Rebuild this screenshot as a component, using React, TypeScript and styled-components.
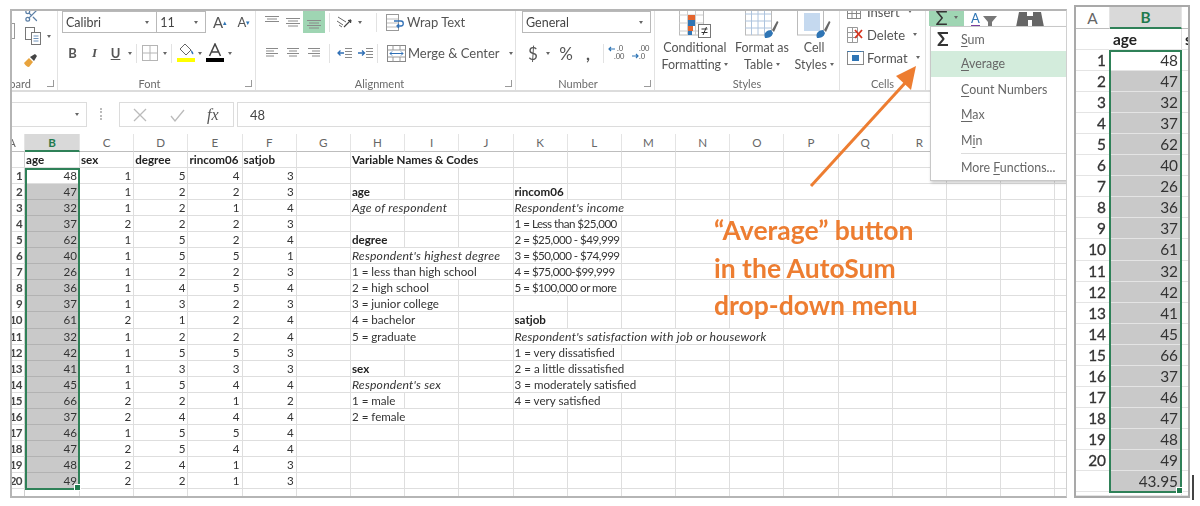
import styled, { createGlobalStyle } from 'styled-components';
import { Scissors } from 'lucide-react';

const GlobalStyle = createGlobalStyle`
  html, body {
    margin: 0;
    background: #fff;
  }
  body {
    font-family: Lato, "Open Sans", sans-serif;
    color: #333;
  }
`;

const GREEN = '#2f8158';
const ORANGE = '#ed7d31';

const Page = styled.div`
  width: 1200px;
  height: 506px;
  box-sizing: border-box;
  padding: 5px 0 0 10px;
  display: flex;
  align-items: flex-start;
  overflow: hidden;
  filter: blur(0.5px);
`;

const ExcelWindow = styled.div`
  position: relative;
  width: 1057px;
  height: 489px;
  margin-top: 4px;
  box-sizing: border-box;
  border: 2px solid #b5b5b5;
  border-right: 1px solid #d0d0d0;
  overflow: hidden;
`;

const Ribbon = styled.div`
  display: flex;
  height: 81px;
  box-sizing: border-box;
  border-bottom: 2px solid #dcdcdc;
  overflow: hidden;
`;

const Group = styled.div<{ $w: number }>`
  width: ${(p) => p.$w}px;
  flex: none;
  height: 80px;
  box-sizing: border-box;
  border-right: 1px solid #e2e2e2;
  display: flex;
  flex-direction: column;
  position: relative;
`;

const GroupLabel = styled.div<{ $shift?: number }>`
  margin-top: auto;
  height: 15px;
  line-height: 15px;
  padding-right: ${(p) => p.$shift ?? 0}px;
  font-size: 11px;
  color: #6a6a6a;
  text-align: center;
  position: relative;
`;

const Launcher = styled.span`
  position: absolute;
  right: 3px;
  top: 4px;
  width: 6px;
  height: 6px;
  border-left: 1px solid #9a9a9a;
  border-bottom: 1px solid #9a9a9a;
  transform: rotate(-90deg);
`;

const ClipLabel = styled.span`
  position: absolute;
  right: 26px;
  width: 21px;
  overflow: hidden;
  direction: rtl;
`;

const PasteStub = styled.div`
  position: absolute;
  left: -2px;
  top: 12px;
  width: 4px;
  height: 14px;
  border: 1px solid #999;
  border-left: 0;
`;

const Row = styled.div<{ $top?: number; $left?: number }>`
  display: flex;
  align-items: center;
  height: 22px;
  margin-top: ${(p) => p.$top ?? 0}px;
  margin-left: ${(p) => p.$left ?? 0}px;
`;

const Combo = styled.div<{ $w: number }>`
  width: ${(p) => p.$w}px;
  height: 22px;
  box-sizing: border-box;
  margin-right: -1px;
  padding: 0 7px 0 3px;
  border: 1px solid #b9b9b9;
  display: flex;
  align-items: center;
  justify-content: space-between;
  font-size: 12.5px;
  color: #444;
`;

const Slot = styled.div<{ $w: number; $on?: boolean }>`
  width: ${(p) => p.$w}px;
  height: 22px;
  flex: none;
  display: flex;
  align-items: center;
  justify-content: center;
  color: #555;
  font-size: 13px;
  background: ${(p) => (p.$on ? '#9fd5b3' : 'transparent')};
`;

const Caret = styled.i`
  display: inline-block;
  flex: none;
  width: 0;
  height: 0;
  border-left: 2.5px solid transparent;
  border-right: 2.5px solid transparent;
  border-top: 3px solid #666;
`;

const ToolSep = styled.i`
  width: 1px;
  height: 19px;
  flex: none;
  margin: 0 4px;
  background: #e2e2e2;
`;

const ToolText = styled.span<{ $gap?: number }>`
  font-size: 13px;
  color: #555;
  margin-left: 2px;
  margin-right: ${(p) => p.$gap ?? 0}px;
  white-space: nowrap;
`;

const BigButtons = styled.div`
  display: flex;
`;

const BigButton = styled.div<{ $w: number }>`
  width: ${(p) => p.$w}px;
  display: flex;
  flex-direction: column;
  align-items: center;
  font-size: 12.5px;
  line-height: 17px;
  color: #555;
  white-space: nowrap;
  svg {
    display: block;
  }
  span {
    display: flex;
    align-items: center;
    gap: 3px;
  }
`;

const CellsRow = styled.div`
  display: flex;
  align-items: center;
  height: 23px;
  padding-left: 7px;
  font-size: 13px;
  color: #555;
  gap: 3px;
  &:first-child {
    margin-top: -11px;
  }
  ${Caret} {
    margin-left: 5px;
  }
`;

const EditingTop = styled.div`
  display: flex;
  align-items: flex-start;
  height: 15px;
`;

const SumButton = styled.div`
  width: 35px;
  height: 15px;
  margin-left: 3px;
  background: #9fd5b3;
  overflow: hidden;
  display: flex;
  justify-content: center;
  gap: 6px;
  font-size: 20px;
  line-height: 13px;
  color: #333;
  ${Caret} {
    margin-top: 5px;
  }
`;

const FormulaBar = styled.div`
  display: flex;
  align-items: flex-start;
  height: 42px;
  padding-top: 10px;
  box-sizing: border-box;
`;

const FormulaBox = styled.div<{ $w?: number; $left?: number }>`
  width: ${(p) => (p.$w ? `${p.$w}px` : 'auto')};
  flex: ${(p) => (p.$w ? 'none' : '1')};
  height: 25px;
  margin-left: ${(p) => p.$left ?? 0}px;
  box-sizing: border-box;
  border: 1px solid #dcdcdc;
  border-left-width: ${(p) => (p.$left ? 1 : 0)}px;
  display: flex;
  align-items: center;
  font-size: 13px;
  color: #444;
`;

const NameCaret = styled(Caret)`
  margin-left: auto;
  margin-right: 7px;
`;

const Dots = styled.div`
  width: 2px;
  height: 12px;
  margin: 6px 0 0 13px;
  border-left: 2px dotted #bbb;
`;

const Fx = styled.span`
  margin-left: 2px;
  font-family: "Liberation Serif", serif;
  font-style: italic;
  font-size: 16px;
  color: #555;
`;

const Sheet = styled.div`
  position: relative;
  display: grid;
  grid-template-columns: 13px 55px repeat(19, 54.2px);
  grid-template-rows: 18px repeat(22, 16.05px);
  height: 362px;
  overflow: hidden;
  font-size: 11.6px;
  line-height: 15px;
`;

const ColHead = styled.div<{ $active?: boolean }>`
  display: flex;
  align-items: center;
  justify-content: center;
  box-sizing: border-box;
  font-weight: ${(p) => (p.$active ? 700 : 400)};
  color: ${(p) => (p.$active ? '#1f7a4d' : '#666')};
  background: ${(p) => (p.$active ? '#d9d9d9' : '#fff')};
  border-right: 1px solid #e4e4e4;
  border-bottom: ${(p) => (p.$active ? `2px solid ${GREEN}` : '1px solid #bdbdbd')};
`;

const ClippedA = styled(ColHead)`
  justify-content: flex-start;
  overflow: hidden;
  text-indent: -4px;
`;

const RowHead = styled.div`
  display: flex;
  align-items: center;
  justify-content: flex-end;
  box-sizing: border-box;
  padding-right: 2px;
  color: #444;
  font-weight: 700;
  letter-spacing: -0.6px;
  border-right: 1px solid #cfcfcf;
  border-bottom: 1px solid #dedede;
  white-space: nowrap;
`;

type Kind = 'bold' | 'italic' | 'money';

const Cell = styled.div<{
  $right?: boolean;
  $kind?: Kind;
  $selected?: boolean;
  $span?: number;
}>`
  grid-column: span ${(p) => p.$span ?? 1};
  display: flex;
  align-items: center;
  justify-content: ${(p) => (p.$right ? 'flex-end' : 'flex-start')};
  box-sizing: border-box;
  padding: 0 2px 0 1px;
  white-space: nowrap;
  overflow: hidden;
  font-weight: ${(p) => (p.$kind === 'bold' ? 700 : 400)};
  font-style: ${(p) => (p.$kind === 'italic' ? 'italic' : 'normal')};
  font-size: ${(p) => (p.$kind === 'italic' ? '12.2px' : 'inherit')};
  letter-spacing: ${(p) => (p.$kind === 'italic' ? '0.2px' : p.$kind === 'money' ? '-0.5px' : 'normal')};
  color: ${(p) => (p.$kind === 'bold' ? '#222' : '#333')};
  background: ${(p) => (p.$selected ? '#c9c9c9' : 'transparent')};
  border-right: 1px solid #dedede;
  border-bottom: 1px solid ${(p) => (p.$selected ? '#b2b2b2' : '#dedede')};
`;

const Selection = styled.div<{ $left: number; $top: number; $w: number; $h: number }>`
  position: absolute;
  left: ${(p) => p.$left}px;
  top: ${(p) => p.$top}px;
  width: ${(p) => p.$w}px;
  height: ${(p) => p.$h}px;
  box-sizing: border-box;
  border: 2px solid ${GREEN};
  &::after {
    content: '';
    position: absolute;
    right: -3px;
    bottom: -3px;
    width: 5px;
    height: 5px;
    background: #1f7a4d;
    border: 1px solid #fff;
  }
`;

const SumMenu = styled.div`
  position: absolute;
  left: 918px;
  top: 15px;
  width: 138px;
  height: 155px;
  box-sizing: border-box;
  background: #fff;
  border: 1px solid #c8c8c8;
  box-shadow: 1px 2px 3px rgba(0, 0, 0, 0.2);
`;

const MenuItem = styled.div<{ $on?: boolean }>`
  position: relative;
  height: 25.5px;
  padding-left: 30px;
  display: flex;
  align-items: center;
  font-size: 12.4px;
  color: #666;
  background: ${(p) => (p.$on ? '#d3ecdc' : 'transparent')};
  &:first-child {
    height: 24px;
  }
  u {
    text-underline-offset: 2px;
  }
`;

const MenuSigma = styled.b`
  position: absolute;
  left: 6px;
  top: 0;
  font-size: 19px;
  font-weight: 700;
  color: #333;
`;

const MenuSep = styled.div`
  height: 1px;
  margin: 0 0 1px 30px;
  background: #dcdcdc;
`;

const Callout = styled.div`
  position: absolute;
  left: 702px;
  top: 201px;
  font-size: 26.5px;
  font-weight: 700;
  line-height: 37.5px;
  color: ${ORANGE};
  white-space: nowrap;
`;

const ArrowLayer = styled.svg`
  position: absolute;
  left: 788px;
  top: 49px;
`;

const Panel = styled.div`
  position: relative;
  width: 116px;
  height: 493px;
  margin-left: 7px;
  flex: none;
  box-sizing: border-box;
  border: 2px solid #a9a9a9;
  overflow: hidden;
  display: grid;
  grid-template-columns: 34px 72px 8px;
  grid-template-rows: 22px repeat(22, 21.05px);
  font-size: 15.4px;
  ${RowHead} {
    border-right-color: transparent;
    border-bottom-color: #e4e4e4;
    padding-right: 3px;
    font-weight: 400;
    letter-spacing: normal;
    color: #333;
    -webkit-text-stroke: 0.3px #333;
  }
  ${Cell} {
    padding: 0 3px;
    border-bottom-color: #e4e4e4;
  }
`;

const TextCursor = styled.div`
  width: 2px;
  height: 25px;
  flex: none;
  margin: 470px 0 0 2px;
  background: #444;
`;

/* ---------- ribbon drawings ---------- */

const LinesIcon = ({ d }: { d: string }) => (
  <svg width="16" height="14" viewBox="0 0 16 14" fill="none" stroke="#8a8a8a" strokeWidth="1">
    <path d={d} />
  </svg>
);

const AlignTop = () => <LinesIcon d="M1 1.5h14M3 4h10M1 6.5h14" />;
const AlignMiddle = () => <LinesIcon d="M1 3.5h14M3 6h10M1 8.500h14M3 11h10" />;
const AlignBottom = () => <LinesIcon d="M1 5.5h14M3 8h10M1 10.500h14M3 13h10" />;
const TextLeft = () => <LinesIcon d="M2 2.500h12M2 5h8M2 7.500h12M2 10h8" />;
const TextCenter = () => <LinesIcon d="M2 2.500h12M4 5h8M2 7.500h12M4 10h8" />;
const TextRight = () => <LinesIcon d="M2 2.500h12M6 5h8M2 7.500h12M6 10h8" />;

const Indent = ({ flip }: { flip?: boolean }) => (
  <svg width="16" height="12" viewBox="0 0 16 12" fill="none">
    <path d="M8 1.500h7M8 4.500h7M8 7.500h7M8 10.500h7" stroke="#8a8a8a" />
    <path
      d={flip ? 'M0 6h6M4 3.500L6.500 6 4 8.500' : 'M7 6H1M3.500 3.500L1 6l2.500 2.500'}
      stroke="#2f6fb5"
      strokeWidth="1.300"
    />
  </svg>
);

const Orientation = () => (
  <svg width="18" height="16" viewBox="0 0 18 16" fill="none" stroke="#666">
    <path d="M2 3l8 5M1 7l6 4M3 11l3 2" />
    <path d="M8 13L15 6M15 6l-3 .500M15 6l-.500 3" stroke="#444" strokeWidth="1.200" />
  </svg>
);

const WrapIcon = () => (
  <svg width="19" height="17" viewBox="0 0 19 17" fill="none">
    <rect x=".5" y=".5" width="12" height="16" stroke="#999" fill="#fff" />
    <path d="M1 5h11M1 9h11M1 13h11" stroke="#bbb" />
    <path d="M8 7h7c3 0 3 5 0 5h-3M13 10l-2 2 2 2" stroke="#2f6fb5" strokeWidth="1.300" />
  </svg>
);

const MergeIcon = () => (
  <svg width="19" height="17" viewBox="0 0 19 17" fill="none">
    <rect x=".5" y=".5" width="18" height="16" stroke="#888" fill="#fff" />
    <path d="M.5 5h18M.5 12h18M6 .5V5M13 .5V5M6 12v4.500M13 12v4.500" stroke="#999" />
    <path d="M3 8.500h13M5 6.500l-2 2 2 2M14 6.500l2 2-2 2" stroke="#2f6fb5" />
  </svg>
);

const BordersIcon = () => (
  <svg width="16" height="16" viewBox="0 0 16 16" fill="none" stroke="#b5b5b5">
    <rect x=".5" y=".5" width="15" height="15" />
    <path d="M8 0v16M0 8h16" />
  </svg>
);

const FillIcon = () => (
  <svg width="18" height="20" viewBox="0 0 18 20" fill="none">
    <path d="M8 1l6 6-5 5-6-6z" stroke="#666" fill="#fff" />
    <path d="M14 7c2 2 3 3 2 4.500-1.500-1-2-2.500-2-4.500z" fill="#2f6fb5" />
    <rect y="15" width="18" height="4" fill="#ffff00" />
  </svg>
);

const FontColorIcon = () => (
  <svg width="18" height="20" viewBox="0 0 18 20" fill="none">
    <path d="M3.500 13L9 1l5.500 12M5.500 9h7" stroke="#444" strokeWidth="1.500" />
    <rect y="15" width="18" height="4" fill="#000" />
  </svg>
);

const CopyIcon = () => (
  <svg width="17" height="18" viewBox="0 0 17 18" fill="none" stroke="#777">
    <rect x=".5" y=".5" width="9" height="12" fill="#fff" />
    <rect x="6.500" y="5.500" width="9" height="12" fill="#fff" />
    <path d="M8.500 9h5M8.500 11.500h5M8.500 14h5" stroke="#6f93bb" />
  </svg>
);

const BrushIcon = () => (
  <svg width="15" height="15" viewBox="0 0 15 15">
    <path d="M1 10l5-5 4 4-4 5c-2 0-4-2-5-4z" fill="#e8a33d" />
    <path d="M7 4l4 4 3-5-2-2z" fill="#444" />
  </svg>
);

const ConditionalIcon = () => (
  <svg width="32" height="28" viewBox="0 0 32 28" fill="none">
    <rect x=".5" y="-4" width="24" height="28" stroke="#bbb" fill="#fff" />
    <path d="M8.500-4v28M16.500-4v28M0 4h24M0 12h24M0 20h24" stroke="#ccc" />
    <rect x="9" y="4" width="7" height="5" fill="#e4652e" />
    <rect x="9" y="9" width="7" height="6" fill="#2f75b5" />
    <rect x="9" y="15" width="5" height="5" fill="#e4652e" />
    <rect x="9" y="20" width="4" height="4" fill="#2f75b5" />
    <rect x="19.500" y="13.500" width="12" height="13" stroke="#777" fill="#fff" />
    <path d="M22.500 18h6M22.500 21.500h6M27.500 16l-3.500 8" stroke="#333" />
  </svg>
);

const TableIcon = ({ fillAll }: { fillAll?: boolean }) => (
  <svg width="34" height="28" viewBox="0 0 34 28" fill="none">
    <rect x=".5" y="-4" width="26" height="28" stroke="#bbb" fill="#fff" />
    {fillAll ? (
      <rect x="7" y="2" width="16" height="18" fill="#c5d9ef" />
    ) : (
      <path d="M6.500-4v28M13-4v28M19.500-4v28M0 3h26M0 10h26M0 17h26" stroke="#aec4de" />
    )}
    <path d="M20 27c-2-5 2-8 6-8l2 3c-1 4-4 5-8 5z" fill="#2f75b5" />
    <path d="M27 19l5-9 1.500 1-4.500 10z" fill="#666" />
  </svg>
);

const InsertIcon = () => (
  <svg width="17" height="15" viewBox="0 0 17 15" fill="none" stroke="#888">
    <rect x=".5" y="4.500" width="13" height="10" />
    <path d="M5 4.500v10M9.500 4.500v10M.5 9.500h13" />
  </svg>
);

const DeleteIcon = () => (
  <svg width="17" height="18" viewBox="0 0 17 18" fill="none">
    <path d="M.5 1.500h10v15H.5zM.5 6.500h10M.5 11.500h10M5.500 1.500v15" stroke="#999" />
    <path d="M8 4l7 8M15 4l-7 8" stroke="#d6341f" strokeWidth="1.800" />
  </svg>
);

const FormatIcon = () => (
  <svg width="17" height="18" viewBox="0 0 17 18" fill="none">
    <rect x=".5" y="2.500" width="16" height="13" stroke="#888" fill="#fff" />
    <path d="M.5 2.500h16" stroke="#2f75b5" strokeDasharray="2 1" />
    <rect x="5" y="6" width="7" height="6" fill="#2f75b5" />
  </svg>
);

const SortIcon = () => (
  <svg width="34" height="15" viewBox="0 0 34 15" fill="none">
    <text x="1" y="11" fontSize="13" fontFamily="Lato, sans-serif" fill="#2f75b5">A</text>
    <rect x="1" y="13" width="9" height="2" fill="#7a3fa0" />
    <path d="M13 4h14l-5 6v5h-4v-5z" fill="#777" />
  </svg>
);

const Binoculars = () => (
  <svg width="28" height="15" viewBox="0 0 28 15">
    <path d="M3 0h8v4h6V0h8l3 15H16V8h-4v7H0z" fill="#666" />
  </svg>
);

const Decimals = ({ more }: { more?: boolean }) => (
  <svg width="20" height="16" viewBox="0 0 20 16" fontSize="7.500" fontFamily="Lato, sans-serif" fill="#555">
    <text x={more ? 9 : 8} y="6">{more ? '.0' : '.00'}</text>
    <text x={more ? 6 : 8} y="14">{more ? '.00' : '.0'}</text>
    <path d={more ? 'M1 4h6M3 2L1 4l2 2' : 'M1 11h6M5 9l2 2-2 2'} stroke="#2f75b5" strokeWidth="1.200" fill="none" />
  </svg>
);

/* ---------- data ---------- */

const columns = 'BCDEFGHIJKLMNOPQRSTU'.split('');

const numbers = [
  [48, 1, 5, 4, 3], [47, 1, 2, 2, 3], [32, 1, 2, 1, 4], [37, 2, 2, 2, 3], [62, 1, 5, 2, 4],
  [40, 1, 5, 5, 1], [26, 1, 2, 2, 3], [36, 1, 4, 5, 4], [37, 1, 3, 2, 3], [61, 2, 1, 2, 4],
  [32, 1, 2, 2, 4], [42, 1, 5, 5, 3], [41, 1, 3, 3, 3], [45, 1, 5, 4, 4], [66, 2, 2, 1, 2],
  [37, 2, 4, 4, 4], [46, 1, 5, 5, 4], [47, 2, 5, 4, 4], [48, 2, 4, 1, 3], [49, 2, 2, 1, 3],
];

type Note = { text: string; span: number; kind?: Kind };
type NoteRow = { h?: Note; k?: Note };

const notes: NoteRow[] = [
  { h: { text: 'Variable Names & Codes', span: 3, kind: 'bold' } },
  {},
  { h: { text: 'age', span: 1, kind: 'bold' }, k: { text: 'rincom06', span: 1, kind: 'bold' } },
  { h: { text: 'Age of respondent', span: 2, kind: 'italic' }, k: { text: "Respondent's income", span: 3, kind: 'italic' } },
  { k: { text: '1 = Less than $25,000', span: 2, kind: 'money' } },
  { h: { text: 'degree', span: 1, kind: 'bold' }, k: { text: '2 = $25,000 - $49,999', span: 2, kind: 'money' } },
  { h: { text: "Respondent's highest degree", span: 3, kind: 'italic' }, k: { text: '3 = $50,000 - $74,999', span: 2, kind: 'money' } },
  { h: { text: '1 = less than high school', span: 3 }, k: { text: '4 = $75,000-$99,999', span: 2, kind: 'money' } },
  { h: { text: '2 = high school', span: 2 }, k: { text: '5 = $100,000 or more', span: 2, kind: 'money' } },
  { h: { text: '3 = junior college', span: 2 } },
  { h: { text: '4 = bachelor', span: 2 }, k: { text: 'satjob', span: 1, kind: 'bold' } },
  { h: { text: '5 = graduate', span: 2 }, k: { text: "Respondent's satisfaction with job or housework", span: 5, kind: 'italic' } },
  { k: { text: '1 = very dissatisfied', span: 2 } },
  { h: { text: 'sex', span: 1, kind: 'bold' }, k: { text: '2 = a little dissatisfied', span: 3 } },
  { h: { text: "Respondent's sex", span: 2, kind: 'italic' }, k: { text: '3 = moderately satisfied', span: 3 } },
  { h: { text: '1 = male', span: 1 }, k: { text: '4 = very satisfied', span: 2 } },
  { h: { text: '2 = female', span: 2 } },
];

const heads = ['age', 'sex', 'degree', 'rincom06', 'satjob'];

const NoteCells = ({ row, r }: { row: NoteRow; r: number }) => {
  const out = [];
  // columns G..U sit after the five data columns; H is index 1, K is index 4 here
  for (let c = 0; c < 15; c++) {
    const note = c === 1 ? row.h : c === 4 ? row.k : undefined;
    if (note) {
      out.push(
        <Cell key={`${r}-${c}`} $span={note.span} $kind={note.kind}>
          {note.text}
        </Cell>,
      );
      c += note.span - 1;
    } else {
      out.push(<Cell key={`${r}-${c}`} />);
    }
  }
  return <>{out}</>;
};

const DataRow = ({ line, i }: { line: number[]; i: number }) => (
  <>
    <RowHead>{i + 1}</RowHead>
    {line.map((v, c) => (
      <Cell key={c} $right $selected={c === 0 && i > 0}>{v}</Cell>
    ))}
    <NoteCells row={notes[i + 1] ?? {}} r={i + 1} />
  </>
);

const MainSheet = () => (
  <Sheet>
    <ClippedA>A</ClippedA>
    {columns.map((c) => (
      <ColHead key={c} $active={c === 'B'}>{c}</ColHead>
    ))}
    <RowHead />
    {heads.map((h) => (
      <Cell key={h} $kind="bold">{h}</Cell>
    ))}
    <NoteCells row={notes[0]} r={0} />
    {numbers.map((line, i) => (
      <DataRow key={i} line={line} i={i} />
    ))}
    <RowHead />
    {columns.map((c) => (
      <Cell key={c} />
    ))}
    <Selection $left={13} $top={34} $w={55} $h={322} />
  </Sheet>
);

const PanelRow = ({ n, value }: { n: number; value: number }) => (
  <>
    <RowHead>{n}</RowHead>
    <Cell $right $selected={n > 1}>{value}</Cell>
    <Cell />
  </>
);

const AgePanel = () => (
  <Panel>
    <ColHead>A</ColHead>
    <ColHead $active>B</ColHead>
    <ColHead />
    <RowHead />
    <Cell $kind="bold">age</Cell>
    <Cell $kind="bold">s</Cell>
    {numbers.map((line, i) => (
      <PanelRow key={i} n={i + 1} value={line[0]} />
    ))}
    <RowHead />
    <Cell $right $selected>43.95</Cell>
    <Cell />
    <RowHead />
    <Cell />
    <Cell />
    <Selection $left={33} $top={43} $w={73} $h={443} />
  </Panel>
);

export default function App() {
  return (
    <>
      <GlobalStyle />
      <Page>
        <ExcelWindow>
          <Ribbon>
            <Group $w={46}>
              <PasteStub />
              <Row $left={11} $top={-7}>
                <Slot $w={16}><Scissors size={15} color="#5b7fa6" /></Slot>
              </Row>
              <Row $left={12} $top={-1}>
                <Slot $w={18}><CopyIcon /></Slot>
                <Caret style={{ marginLeft: 5 }} />
              </Row>
              <Row $left={10} $top={2}>
                <Slot $w={16}><BrushIcon /></Slot>
              </Row>
              <GroupLabel>
                <ClipLabel>board</ClipLabel>
                <Launcher />
              </GroupLabel>
            </Group>

            <Group $w={198}>
              <Row $left={4}>
                <Combo $w={96}>Calibri<Caret /></Combo>
                <Combo $w={50}>11<Caret /></Combo>
                <Slot $w={26} style={{ marginLeft: 2, fontSize: 15 }}>A<sup style={{ fontSize: 7, color: '#2f75b5' }}>▴</sup></Slot>
                <Slot $w={22} style={{ fontSize: 13 }}>A<sup style={{ fontSize: 7, color: '#2f75b5' }}>▾</sup></Slot>
              </Row>
              <Row $top={9} $left={4}>
                <Slot $w={21} style={{ fontWeight: 700 }}>B</Slot>
                <Slot $w={23} style={{ fontStyle: 'italic', fontFamily: '"Liberation Serif", serif', fontWeight: 700 }}>I</Slot>
                <Slot $w={19} style={{ textDecoration: 'underline', fontWeight: 700 }}>U</Slot>
                <Caret style={{ marginLeft: 3 }} />
                <ToolSep style={{ marginRight: 3 }} />
                <Slot $w={20}><BordersIcon /></Slot>
                <Caret style={{ marginLeft: 3 }} />
                <ToolSep style={{ marginRight: 5 }} />
                <Slot $w={18}><FillIcon /></Slot>
                <Caret style={{ marginLeft: 3, marginRight: 3 }} />
                <Slot $w={20}><FontColorIcon /></Slot>
                <Caret style={{ marginLeft: 3 }} />
              </Row>
              <GroupLabel $shift={14}>Font<Launcher /></GroupLabel>
            </Group>

            <Group $w={260}>
              <Row $left={5}>
                <Slot $w={21}><AlignTop /></Slot>
                <Slot $w={21}><AlignMiddle /></Slot>
                <Slot $w={22} $on><AlignBottom /></Slot>
                <ToolSep />
                <Slot $w={22}><Orientation /></Slot>
                <Caret style={{ marginLeft: 2 }} />
                <ToolSep style={{ margin: '0 9px 0 14px' }} />
                <WrapIcon />
                <ToolText>Wrap Text</ToolText>
              </Row>
              <Row $top={9} $left={5}>
                <Slot $w={21}><TextLeft /></Slot>
                <Slot $w={21}><TextCenter /></Slot>
                <Slot $w={22}><TextRight /></Slot>
                <ToolSep />
                <Slot $w={21}><Indent /></Slot>
                <Slot $w={21}><Indent flip /></Slot>
                <ToolSep style={{ margin: '0 9px 0 1px' }} />
                <MergeIcon />
                <ToolText $gap={9}>Merge &amp; Center</ToolText>
                <Caret />
              </Row>
              <GroupLabel $shift={12}>Alignment<Launcher /></GroupLabel>
            </Group>

            <Group $w={139}>
              <Row $left={6}>
                <Combo $w={129}>General<Caret /></Combo>
              </Row>
              <Row $top={9} $left={6}>
                <Slot $w={22} style={{ fontSize: 17 }}>$</Slot>
                <Caret style={{ marginLeft: 2, marginRight: 6 }} />
                <Slot $w={20} style={{ fontSize: 17 }}>%</Slot>
                <Slot $w={24} style={{ fontSize: 17, fontWeight: 700 }}>,</Slot>
                <ToolSep style={{ margin: '0 3px' }} />
                <Slot $w={22}><Decimals more /></Slot>
                <Slot $w={24}><Decimals /></Slot>
              </Row>
              <GroupLabel $shift={14}>Number<Launcher /></GroupLabel>
            </Group>

            <Group $w={185}>
              <BigButtons>
                <BigButton $w={80}>
                  <ConditionalIcon />
                  Conditional
                  <span>Formatting<Caret /></span>
                </BigButton>
                <BigButton $w={55}>
                  <TableIcon />
                  Format as
                  <span>Table<Caret /></span>
                </BigButton>
                <BigButton $w={50}>
                  <TableIcon fillAll />
                  Cell
                  <span>Styles<Caret /></span>
                </BigButton>
              </BigButtons>
              <GroupLabel>Styles</GroupLabel>
            </Group>

            <Group $w={86}>
              <CellsRow><InsertIcon />Insert<Caret /></CellsRow>
              <CellsRow><DeleteIcon />Delete<Caret /></CellsRow>
              <CellsRow><FormatIcon />Format<Caret /></CellsRow>
              <GroupLabel>Cells</GroupLabel>
            </Group>

            <Group $w={141} style={{ borderRight: 0 }}>
              <EditingTop>
                <SumButton>Σ<Caret /></SumButton>
                <span style={{ marginLeft: 6 }}><SortIcon /></span>
                <span style={{ marginLeft: 12 }}><Binoculars /></span>
              </EditingTop>
            </Group>
          </Ribbon>

          <FormulaBar>
            <FormulaBox $w={75}><NameCaret /></FormulaBox>
            <Dots />
            <FormulaBox $w={115} $left={15}>
              <svg width="72" height="14" viewBox="0 0 72 14" fill="none" stroke="#bbb" strokeWidth="1.300" style={{ marginLeft: 13 }}>
                <path d="M1 1l12 12M13 1L1 13" />
                <path d="M38 8l4 5 9-11" />
              </svg>
              <Fx>fx</Fx>
            </FormulaBox>
            <FormulaBox $left={3} style={{ paddingLeft: 12 }}>48</FormulaBox>
          </FormulaBar>

          <MainSheet />

          <SumMenu>
            <MenuItem><MenuSigma>Σ</MenuSigma><span><u>S</u>um</span></MenuItem>
            <MenuItem $on><span><u>A</u>verage</span></MenuItem>
            <MenuItem><span><u>C</u>ount Numbers</span></MenuItem>
            <MenuItem><span><u>M</u>ax</span></MenuItem>
            <MenuItem><span>M<u>i</u>n</span></MenuItem>
            <MenuSep />
            <MenuItem><span>More <u>F</u>unctions...</span></MenuItem>
          </SumMenu>

          <ArrowLayer width="130" height="130" viewBox="0 0 130 130" fill="none">
            <path d="M11 126L106 22" stroke={ORANGE} strokeWidth="3" />
            <path d="M116 6L111 30 96 16z" fill={ORANGE} />
          </ArrowLayer>

          <Callout>
            “Average” button
            <br />
            in the AutoSum
            <br />
            drop-down menu
          </Callout>
        </ExcelWindow>

        <AgePanel />
        <TextCursor />
      </Page>
    </>
  );
}
